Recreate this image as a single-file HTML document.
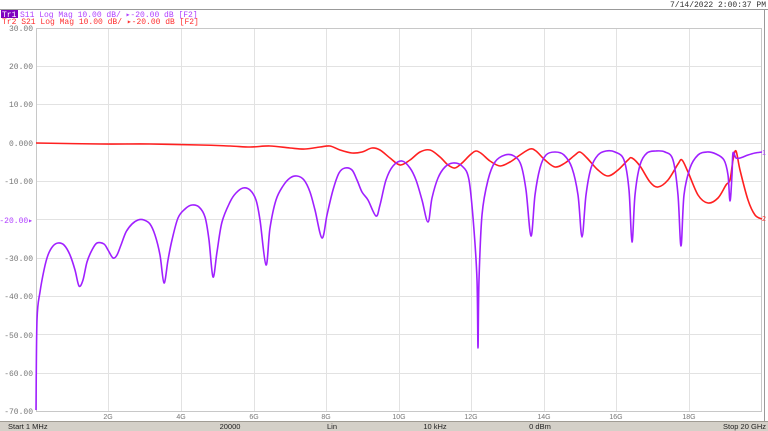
<!DOCTYPE html>
<html><head><style>
body{margin:0;width:768px;height:431px;background:#fff;overflow:hidden;font-family:"Liberation Mono",monospace}
svg{position:absolute;left:0;top:0}
</style></head><body>
<svg width="768" height="431" xmlns="http://www.w3.org/2000/svg" font-family="Liberation Sans, sans-serif">
<rect x="0" y="0" width="768" height="431" fill="#fff"/>
<text x="766" y="7" font-size="8" fill="#333" text-anchor="end" font-family="Liberation Mono, monospace">7/14/2022 2:00:37 PM</text>
<line x1="0" y1="9.5" x2="768" y2="9.5" stroke="#999"/>
<rect x="1" y="10" width="17" height="8" fill="#8000c0"/>
<text x="2" y="17" font-size="8" fill="#fff" font-family="Liberation Mono, monospace">Tr1</text>
<text x="20" y="17" font-size="8" fill="#b040ff" font-family="Liberation Mono, monospace">S11 Log Mag 10.00 dB/ ▸-20.00 dB [F2]</text>
<text x="2" y="24" font-size="8" fill="#ff3030" font-family="Liberation Mono, monospace">Tr2 S21 Log Mag 10.00 dB/ ▸-20.00 dB [F2]</text>
<line x1="764.5" y1="10" x2="764.5" y2="421" stroke="#999"/>
<g stroke="#e2e2e2" stroke-width="1">
<line x1="36" y1="66.5" x2="762" y2="66.5"/><line x1="36" y1="104.5" x2="762" y2="104.5"/><line x1="36" y1="143.5" x2="762" y2="143.5"/><line x1="36" y1="181.5" x2="762" y2="181.5"/><line x1="36" y1="219.5" x2="762" y2="219.5"/><line x1="36" y1="258.5" x2="762" y2="258.5"/><line x1="36" y1="296.5" x2="762" y2="296.5"/><line x1="36" y1="334.5" x2="762" y2="334.5"/><line x1="36" y1="373.5" x2="762" y2="373.5"/>
<line x1="108.5" y1="28" x2="108.5" y2="411"/><line x1="181.5" y1="28" x2="181.5" y2="411"/><line x1="254.5" y1="28" x2="254.5" y2="411"/><line x1="326.5" y1="28" x2="326.5" y2="411"/><line x1="399.5" y1="28" x2="399.5" y2="411"/><line x1="471.5" y1="28" x2="471.5" y2="411"/><line x1="544.5" y1="28" x2="544.5" y2="411"/><line x1="616.5" y1="28" x2="616.5" y2="411"/><line x1="689.5" y1="28" x2="689.5" y2="411"/>
</g>
<rect x="36.5" y="28.5" width="725" height="383" fill="none" stroke="#c8c8c8"/>
<g font-size="8" fill="#777" text-anchor="end" font-family="Liberation Mono, monospace">
<text x="33" y="31">30.00</text><text x="33" y="69">20.00</text><text x="33" y="107">10.00</text><text x="33" y="146">0.000</text><text x="33" y="184">-10.00</text><text x="33" y="223" fill="#b040ff">-20.00▸</text><text x="33" y="261">-30.00</text><text x="33" y="299">-40.00</text><text x="33" y="338">-50.00</text><text x="33" y="376">-60.00</text><text x="33" y="414">-70.00</text>
</g>
<g font-size="7" fill="#777" text-anchor="middle">
<text x="108" y="419">2G</text><text x="181" y="419">4G</text><text x="254" y="419">6G</text><text x="326" y="419">8G</text><text x="399" y="419">10G</text><text x="471" y="419">12G</text><text x="544" y="419">14G</text><text x="616" y="419">16G</text><text x="689" y="419">18G</text>
</g>
<polyline id="r" fill="none" stroke="#ff2020" stroke-width="1.6" stroke-linejoin="round" points="36,143 100,144 150,144 200,145 230,146 250,147 270,146 290,148 305,149 320,147 330,146 340,150 352,153 362,152 372,148 380,150 390,158 400,165 410,160 420,152 430,150 440,157 448,165 455,168 462,163 470,155 476,151 482,154 490,161 500,166 510,162 520,155 530,149 536,151 545,160 555,167 565,163 575,155 580,152 587,158 598,170 608,176 618,170 628,160 632,158 640,166 650,182 658,187 668,180 678,164 682,160 688,172 698,195 708,203 718,198 726,185 730,180 733,160 736,151 740,170 748,200 755,215 762,219"/>
<polyline id="p" fill="none" stroke="#a020ff" stroke-width="1.6" stroke-linejoin="round" points="36,410 37,320 40,292 44,270 48,255 53,246 58,243 64,245 70,255 75,270 79,286 83,280 87,262 92,250 97,243 104,244 108,250 113,258 117,255 121,245 126,232 132,224 138,220 144,220 150,224 155,235 160,255 164,283 168,260 172,240 178,218 185,209 192,205 199,207 205,217 209,240 213,277 217,252 222,222 230,202 236,193 243,188 250,190 256,200 260,220 266,265 270,228 276,200 283,186 290,178 297,176 304,180 310,192 315,210 322,238 327,215 333,190 339,173 345,168 352,170 357,180 362,192 368,200 376,216 380,205 386,180 393,166 402,161 410,168 416,180 422,200 428,222 432,198 438,178 445,167 453,163 462,166 469,180 474,230 477,280 478,348 479,280 482,215 488,180 495,162 505,155 514,156 521,165 526,190 531,236 535,195 540,168 546,155 555,152 564,155 572,168 578,195 582,237 586,195 591,168 598,155 606,151 615,152 624,160 629,190 632,242 635,195 640,165 647,153 656,151 665,152 673,160 678,195 681,246 684,195 690,168 698,155 707,152 716,154 724,160 728,175 730,201 732,175 733,153 736,158 740,158 748,155 755,153 762,152"/>
<text x="762" y="155" font-size="7" fill="#b040ff">1</text>
<text x="762" y="221" font-size="7" fill="#ff3030">2</text>
<rect x="0" y="421" width="768" height="10" fill="#d4d0c8"/>
<line x1="0" y1="421.5" x2="768" y2="421.5" stroke="#a09c94"/>
<g font-size="7.5" fill="#222">
<text x="8" y="429">Start 1 MHz</text>
<text x="230" y="429" text-anchor="middle">20000</text>
<text x="332" y="429" text-anchor="middle">Lin</text>
<text x="435" y="429" text-anchor="middle">10 kHz</text>
<text x="540" y="429" text-anchor="middle">0 dBm</text>
<text x="766" y="429" text-anchor="end">Stop 20 GHz</text>
</g>
</svg>
<script>
["r","p"].forEach(function(id){
var pl=document.getElementById(id);
var pts=pl.getAttribute("points").trim().split(/\s+/).map(function(s){return s.split(",").map(Number);});
var d="M"+pts[0][0]+","+pts[0][1];
for(var i=0;i<pts.length-1;i++){
var p0=pts[i>0?i-1:i],p1=pts[i],p2=pts[i+1],p3=pts[i+2<pts.length?i+2:i+1];
var t=1/6;
d+=" C"+(p1[0]+(p2[0]-p0[0])*t).toFixed(1)+","+(p1[1]+(p2[1]-p0[1])*t).toFixed(1)+" "+(p2[0]-(p3[0]-p1[0])*t).toFixed(1)+","+(p2[1]-(p3[1]-p1[1])*t).toFixed(1)+" "+p2[0]+","+p2[1];
}
var path=document.createElementNS("http://www.w3.org/2000/svg","path");
path.setAttribute("d",d);
["fill","stroke","stroke-width","stroke-linejoin"].forEach(function(a){path.setAttribute(a,pl.getAttribute(a));});
pl.parentNode.replaceChild(path,pl);
});
</script>
</body></html>
